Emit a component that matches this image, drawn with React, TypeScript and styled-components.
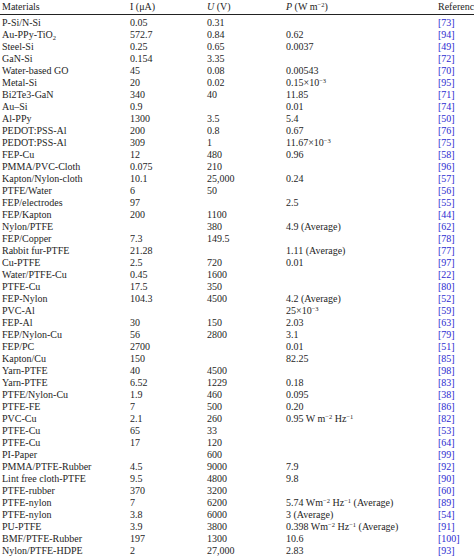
import React from "react";
import styled, { createGlobalStyle } from "styled-components";

const Global = createGlobalStyle`
  html, body { margin: 0; padding: 0; background: #fff; overflow: hidden; }
  body { width: 474px; height: 559px; }
`;

const Table = styled.div`
  width: 500px;
  font-family: "Liberation Serif", "Times New Roman", serif;
  font-size: 10px;
  color: #1e1e1e;
`;

const cols = "128px 77px 79px 152px 1fr";

const HeaderRow = styled.div`
  display: grid;
  grid-template-columns: ${cols};
  padding-left: 2px;
  height: 14px;
  line-height: 14px;
  border-bottom: 1.6px solid #222;
  margin-bottom: 2px;
`;

const Row = styled.div`
  display: grid;
  grid-template-columns: ${cols};
  padding-left: 2px;
  height: 12px;
  line-height: 12px;
`;

const Cell = styled.div`
  white-space: nowrap;
`;

const Ref = styled.span`
  color: #2b2bd0;
`;

const Em = styled.i``;

const Sup = styled.sup`
  font-size: 6.5px;
  line-height: 0;
  vertical-align: 3.5px;
`;

const Sub = styled.sub`
  font-size: 6.5px;
  line-height: 0;
  vertical-align: -2px;
`;

type R = [React.ReactNode, string, string, React.ReactNode, string];

const e3 = (m: string) => (
  <>
    {m}×10<Sup>−3</Sup>
  </>
);

const hz = (v: string, avg?: boolean) => (
  <>
    {v} Wm<Sup>−2</Sup> Hz<Sup>−1</Sup>
    {avg ? " (Average)" : ""}
  </>
);

const rows: R[] = [
  ["P-Si/N-Si", "0.05", "0.31", "", "73"],
  [<>Au-PPy-TiO<Sub>2</Sub></>, "572.7", "0.84", "0.62", "94"],
  ["Steel-Si", "0.25", "0.65", "0.0037", "49"],
  ["GaN-Si", "0.154", "3.35", "", "72"],
  ["Water-based GO", "45", "0.08", "0.00543", "70"],
  ["Metal-Si", "20", "0.02", e3("0.15"), "95"],
  ["Bi2Te3-GaN", "340", "40", "11.85", "71"],
  ["Au–Si", "0.9", "", "0.01", "74"],
  ["Al-PPy", "1300", "3.5", "5.4", "50"],
  ["PEDOT:PSS-Al", "200", "0.8", "0.67", "76"],
  ["PEDOT:PSS-Al", "309", "1", e3("11.67"), "75"],
  ["FEP-Cu", "12", "480", "0.96", "58"],
  ["PMMA/PVC-Cloth", "0.075", "210", "", "96"],
  ["Kapton/Nylon-cloth", "10.1", "25,000", "0.24", "57"],
  ["PTFE/Water", "6", "50", "", "56"],
  ["FEP/electrodes", "97", "", "2.5", "55"],
  ["FEP/Kapton", "200", "1100", "", "44"],
  ["Nylon/PTFE", "", "380", "4.9 (Average)", "62"],
  ["FEP/Copper", "7.3", "149.5", "", "78"],
  ["Rabbit fur-PTFE", "21.28", "", "1.11 (Average)", "77"],
  ["Cu-PTFE", "2.5", "720", "0.01", "97"],
  ["Water/PTFE-Cu", "0.45", "1600", "", "22"],
  ["PTFE-Cu", "17.5", "350", "", "80"],
  ["FEP-Nylon", "104.3", "4500", "4.2 (Average)", "52"],
  ["PVC-Al", "", "", e3("25"), "59"],
  ["FEP-Al", "30", "150", "2.03", "63"],
  ["FEP/Nylon-Cu", "56", "2800", "3.1", "79"],
  ["FEP/PC", "2700", "", "0.01", "51"],
  ["Kapton/Cu", "150", "", "82.25", "85"],
  ["Yarn-PTFE", "40", "4500", "", "98"],
  ["Yarn-PTFE", "6.52", "1229", "0.18", "83"],
  ["PTFE/Nylon-Cu", "1.9", "460", "0.095", "38"],
  ["PTFE-FE", "7", "500", "0.20", "86"],
  [
    "PVC-Cu",
    "2.1",
    "260",
    <>
      0.95 W m<Sup>−2</Sup> Hz<Sup>−1</Sup>
    </>,
    "82",
  ],
  ["PTFE-Cu", "65", "33", "", "53"],
  ["PTFE-Cu", "17", "120", "", "64"],
  ["PI-Paper", "", "600", "", "99"],
  ["PMMA/PTFE-Rubber", "4.5", "9000", "7.9", "92"],
  ["Lint free cloth-PTFE", "9.5", "4800", "9.8", "90"],
  ["PTFE-rubber", "370", "3200", "", "60"],
  ["PTFE-nylon", "7", "6200", hz("5.74", true), "89"],
  ["PTFE-nylon", "3.8", "6000", "3 (Average)", "54"],
  ["PU-PTFE", "3.9", "3800", hz("0.398", true), "91"],
  ["BMF/PTFE-Rubber", "197", "1300", "10.6", "100"],
  ["Nylon/PTFE-HDPE", "2", "27,000", "2.83", "93"],
];

export default function App() {
  return (
    <>
      <Global />
      <Table>
        <HeaderRow>
          <Cell>Materials</Cell>
          <Cell>I (μA)</Cell>
          <Cell>
            <Em>U</Em> (V)
          </Cell>
          <Cell>
            <Em>P</Em> (W m<Sup>−2</Sup>)
          </Cell>
          <Cell>References</Cell>
        </HeaderRow>
        {rows.map((r, i) => (
          <Row key={i}>
            <Cell>{r[0]}</Cell>
            <Cell>{r[1]}</Cell>
            <Cell>{r[2]}</Cell>
            <Cell>{r[3]}</Cell>
            <Cell>
              <Ref>[{r[4]}]</Ref>
            </Cell>
          </Row>
        ))}
      </Table>
    </>
  );
}
